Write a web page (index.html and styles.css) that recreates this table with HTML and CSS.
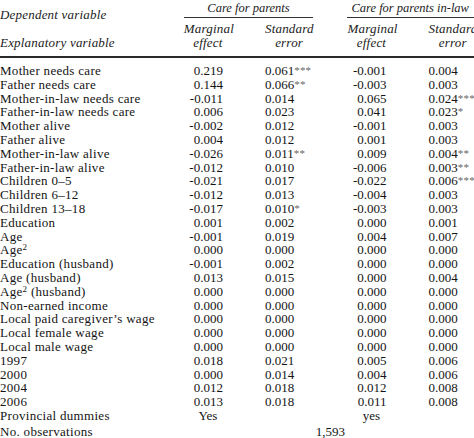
FILE: index.html
```html
<!DOCTYPE html>
<html>
<head>
<meta charset="utf-8">
<link rel="stylesheet" href="styles.css">
</head>
<body>
<table class="results">
  <colgroup>
    <col class="c-label"><col class="c-me"><col class="c-se"><col class="c-gap"><col class="c-me"><col class="c-se">
  </colgroup>
  <thead>
    <tr>
      <th class="lab" rowspan="2"><div class="dep">Dependent variable</div><div class="exp">Explanatory variable</div></th>
      <th class="group" colspan="2">Care for parents</th>
      <th class="gap" rowspan="2"></th>
      <th class="group" colspan="2">Care for parents in-law</th>
    </tr>
    <tr>
      <th class="sub me">Marginal<br>effect</th>
      <th class="sub se">Standard<br>error</th>
      <th class="sub me">Marginal<br>effect</th>
      <th class="sub se">Standard<br>error</th>
    </tr>
  </thead>
  <tbody>
    <tr><td>Mother needs care</td><td class="me">0.219</td><td class="se">0.061<span class="st">***</span></td><td></td><td class="me">-0.001</td><td class="se">0.004</td></tr>
    <tr><td>Father needs care</td><td class="me">0.144</td><td class="se">0.066<span class="st">**</span></td><td></td><td class="me">-0.003</td><td class="se">0.003</td></tr>
    <tr><td>Mother-in-law needs care</td><td class="me">-0.011</td><td class="se">0.014</td><td></td><td class="me">0.065</td><td class="se">0.024<span class="st">***</span></td></tr>
    <tr><td>Father-in-law needs care</td><td class="me">0.006</td><td class="se">0.023</td><td></td><td class="me">0.041</td><td class="se">0.023<span class="st">*</span></td></tr>
    <tr><td>Mother alive</td><td class="me">-0.002</td><td class="se">0.012</td><td></td><td class="me">-0.001</td><td class="se">0.003</td></tr>
    <tr><td>Father alive</td><td class="me">0.004</td><td class="se">0.012</td><td></td><td class="me">0.001</td><td class="se">0.003</td></tr>
    <tr><td>Mother-in-law alive</td><td class="me">-0.026</td><td class="se">0.011<span class="st">**</span></td><td></td><td class="me">0.009</td><td class="se">0.004<span class="st">**</span></td></tr>
    <tr><td>Father-in-law alive</td><td class="me">-0.012</td><td class="se">0.010</td><td></td><td class="me">-0.006</td><td class="se">0.003<span class="st">**</span></td></tr>
    <tr><td>Children 0–5</td><td class="me">-0.021</td><td class="se">0.017</td><td></td><td class="me">-0.022</td><td class="se">0.006<span class="st">***</span></td></tr>
    <tr><td>Children 6–12</td><td class="me">-0.012</td><td class="se">0.013</td><td></td><td class="me">-0.004</td><td class="se">0.003</td></tr>
    <tr><td>Children 13–18</td><td class="me">-0.017</td><td class="se">0.010<span class="st">*</span></td><td></td><td class="me">-0.003</td><td class="se">0.003</td></tr>
    <tr><td>Education</td><td class="me">0.001</td><td class="se">0.002</td><td></td><td class="me">0.000</td><td class="se">0.001</td></tr>
    <tr><td>Age</td><td class="me">-0.001</td><td class="se">0.019</td><td></td><td class="me">0.004</td><td class="se">0.007</td></tr>
    <tr><td>Age<sup>2</sup></td><td class="me">0.000</td><td class="se">0.000</td><td></td><td class="me">0.000</td><td class="se">0.000</td></tr>
    <tr><td>Education (husband)</td><td class="me">-0.001</td><td class="se">0.002</td><td></td><td class="me">0.000</td><td class="se">0.000</td></tr>
    <tr><td>Age (husband)</td><td class="me">0.013</td><td class="se">0.015</td><td></td><td class="me">0.000</td><td class="se">0.004</td></tr>
    <tr><td>Age<sup>2</sup> (husband)</td><td class="me">0.000</td><td class="se">0.000</td><td></td><td class="me">0.000</td><td class="se">0.000</td></tr>
    <tr><td>Non-earned income</td><td class="me">0.000</td><td class="se">0.000</td><td></td><td class="me">0.000</td><td class="se">0.000</td></tr>
    <tr><td>Local paid caregiver’s wage</td><td class="me">0.000</td><td class="se">0.000</td><td></td><td class="me">0.000</td><td class="se">0.000</td></tr>
    <tr><td>Local female wage</td><td class="me">0.000</td><td class="se">0.000</td><td></td><td class="me">0.000</td><td class="se">0.000</td></tr>
    <tr><td>Local male wage</td><td class="me">0.000</td><td class="se">0.000</td><td></td><td class="me">0.000</td><td class="se">0.000</td></tr>
    <tr><td>1997</td><td class="me">0.018</td><td class="se">0.021</td><td></td><td class="me">0.005</td><td class="se">0.006</td></tr>
    <tr><td>2000</td><td class="me">0.000</td><td class="se">0.014</td><td></td><td class="me">0.004</td><td class="se">0.006</td></tr>
    <tr><td>2004</td><td class="me">0.012</td><td class="se">0.018</td><td></td><td class="me">0.012</td><td class="se">0.008</td></tr>
    <tr><td>2006</td><td class="me">0.013</td><td class="se">0.018</td><td></td><td class="me">0.011</td><td class="se">0.008</td></tr>
    <tr><td>Provincial dummies</td><td class="ctr">Yes</td><td></td><td></td><td class="ctr">yes</td><td></td></tr>
    <tr class="obs"><td>No. observations</td><td class="ctr" colspan="5">1,593</td></tr>
  </tbody>
</table>
</body>
</html>
```

FILE: styles.css
```css
html, body {
  margin: 0;
  padding: 0;
  background: #fff;
  overflow: hidden;
}

body {
  font-family: "Liberation Serif", "Times New Roman", serif;
  font-size: 13px;
  color: #141414;
}

.results {
  width: 477px;
  table-layout: fixed;
  border-collapse: separate;
  border-spacing: 0;
}

.c-label { width: 183px; }
.c-me { width: 48px; }
.c-se { width: 81px; }
.c-gap { width: 34px; }

th, td {
  padding: 0;
  font-weight: normal;
  white-space: nowrap;
}

thead th {
  font-style: italic;
  line-height: 14px;
  vertical-align: top;
  color: #222;
  letter-spacing: 0.2px;
}

thead .lab {
  text-align: left;
  padding-top: 8px;
  border-bottom: 2px solid #2a2a2a;
}

thead .dep {
  margin-bottom: 14px;
}

thead .gap {
  border-bottom: 2px solid #2a2a2a;
}

thead .group {
  text-align: center;
  font-size: 12.5px;
  letter-spacing: 0;
  padding-top: 1px;
  padding-bottom: 2px;
  border-bottom: 1px solid #333;
}

thead .group:last-child {
  padding-right: 4px;
}

thead .sub {
  padding-top: 4px;
  padding-bottom: 6px;
  border-bottom: 2px solid #2a2a2a;
  text-align: center;
}

thead .sub.se {
  padding-left: 33px;
}

tbody td {
  height: 13.8px;
  line-height: 13.8px;
  text-align: left;
}

tbody td:first-child {
  letter-spacing: 0.3px;
}

tbody tr:first-child td {
  padding-top: 6px;
}

tbody td.me {
  text-align: right;
  padding-right: 9px;
}

tbody td.se {
  padding-left: 33px;
}

tbody td.ctr {
  text-align: center;
}

tbody tr.obs td {
  padding-top: 2px;
}

.st {
  color: #666;
  font-size: 11px;
  letter-spacing: 0.2px;
  vertical-align: 1px;
}

sup {
  font-size: 9px;
  line-height: 0;
  vertical-align: 4px;
}
```
